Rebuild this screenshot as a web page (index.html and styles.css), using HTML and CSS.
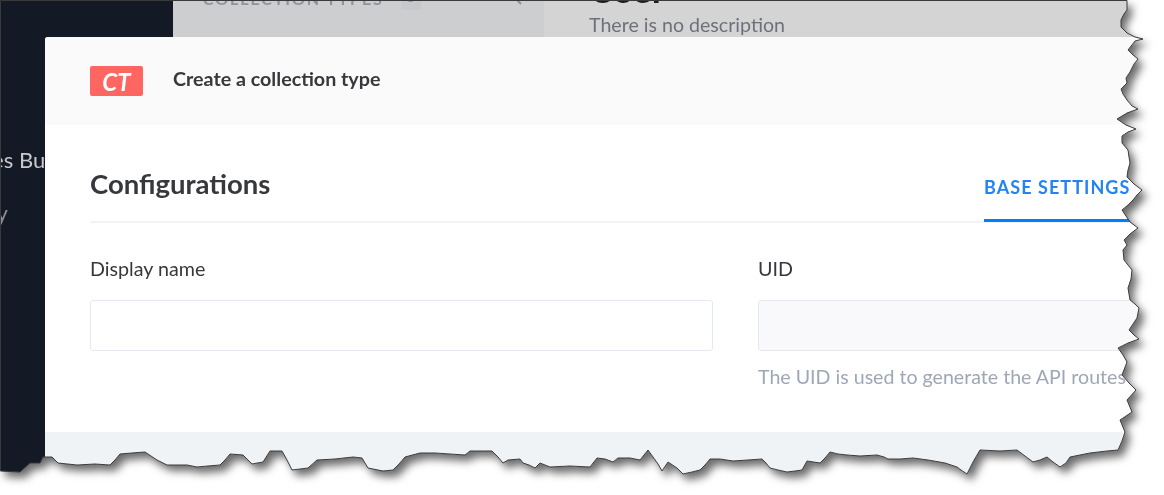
FILE: index.html
```html
<!DOCTYPE html>
<html lang="en">
<head>
<meta charset="utf-8">
<title>Create a collection type</title>
<link rel="stylesheet" href="styles.css">
</head>
<body>
<div class="page">
  <div class="shadow-wrap">
    <div class="shot">
      <div class="backdrop">
        <aside class="sidebar">
          <div class="side-item">Content-Types Builder</div>
          <div class="side-item side-item-second">Media Library</div>
        </aside>
        <section class="types">
          <div class="types-head">
            <span class="types-title">COLLECTION TYPES</span>
            <span class="types-count">6</span>
            <svg class="search" width="16" height="16" viewBox="0 0 16 16"><circle cx="6" cy="6" r="5" fill="none" stroke="#8b929c" stroke-width="2"/><path d="M10 10l5 5" stroke="#8b929c" stroke-width="2"/></svg>
          </div>
        </section>
        <main class="main">
          <div class="main-title">User</div>
          <div class="main-desc">There is no description</div>
        </main>
      </div>
      <div class="modal">
        <header class="modal-head">
          <span class="badge">CT</span>
          <span class="modal-title">Create a collection type</span>
        </header>
        <div class="modal-body">
          <div class="config-row">
            <h2 class="config-title">Configurations</h2>
            <div class="tabs"><div class="tab">BASE SETTINGS</div></div>
          </div>
          <div class="form-grid">
            <div class="field">
              <label class="label">Display name</label>
              <div class="input"></div>
            </div>
            <div class="field">
              <label class="label">UID</label>
              <div class="input input-disabled"></div>
              <p class="help">The UID is used to generate the API routes</p>
            </div>
          </div>
        </div>
        <footer class="modal-foot"></footer>
      </div>
    </div>
  </div>
  <svg class="edge" width="1164" height="495" viewBox="0 0 1164 495">
    <polygon fill="none" stroke="#3a3a3a" stroke-width="1" points="0.5,0.5 1127,0.5 1127,10 1124,14 1121,20 1121,27 1124,30 1127,33 1135,37 1143,39 1135,41 1128,50 1133,55 1138,59 1134,64 1130,72 1126,78 1127,83 1121,89 1123,94 1127,100 1132,106 1138,109 1127,113 1117,119 1126,125 1136,129 1128,132 1122,136 1122,143 1128,150 1129,157 1130,163 1128,170 1127,177 1134,184 1142,190 1137,195 1133,200 1128,205 1122,210 1126,216 1130,222 1138,228 1130,234 1124,240 1127,245 1123,250 1124,260 1132,270 1131,279 1128,288 1130,300 1135,304 1139,308 1137,318 1129,330 1134,335 1139,339 1128,343 1118,348 1123,355 1127,362 1122,375 1129,383 1136,390 1127,400 1132,412 1126,416 1120,420 1125,432 1122,441 1118,450 1107,451 1090,453 1070,457 1066,463 1060,467 1053,462 1047,457 1040,460 1033,462 1025,456 1017,450 1000,451 980,450 973,462 967,474 961,470 957,467 945,463 928,460 913,458 900,459 888,459 884,457 877,455 860,456 847,455 838,454 830,452 825,458 820,463 807,461 802,470 795,471 787,472 778,470 770,468 766,463 762,459 748,460 733,461 720,459 710,459 705,465 700,470 692,472 683,474 677,468 668,462 662,471 658,464 653,457 648,450 644,455 640,460 630,458 618,458 613,462 605,459 597,458 590,467 570,466 550,467 540,463 535,468 529,465 523,463 520,459 508,460 503,463 498,457 492,451 480,451 470,451 465,455 450,454 435,453 420,453 405,457 399,464 393,470 383,471 368,468 362,458 353,457 335,459 317,460 308,468 292,470 287,460 282,451 270,451 263,462 252,464 243,455 230,454 225,460 220,465 208,466 197,467 187,465 167,465 157,460 145,452 132,453 120,454 115,460 110,465 95,464 77,465 58,463 52,457 43,457 40,463 30,463 20,472 0.5,471"/>
  </svg>
</div>
</body>
</html>
```

FILE: styles.css
```css
* { box-sizing: border-box; }
html, body { margin: 0; padding: 0; background: #fff; }
body { font-family: Lato, "Liberation Sans", sans-serif; overflow: hidden; text-rendering: optimizeLegibility; }

.page { position: relative; width: 1164px; height: 495px; }
.shadow-wrap { width: 1164px; height: 495px; filter: drop-shadow(5px 6px 4px rgba(0, 0, 0, 0.58)); }

.shot {
  position: relative;
  width: 1164px;
  height: 495px;
  overflow: hidden;
  clip-path: polygon(0 0, 1127px 0, 1127px 10px, 1124px 14px, 1121px 20px, 1121px 27px, 1124px 30px, 1127px 33px, 1135px 37px, 1143px 39px, 1135px 41px, 1128px 50px, 1133px 55px, 1138px 59px, 1134px 64px, 1130px 72px, 1126px 78px, 1127px 83px, 1121px 89px, 1123px 94px, 1127px 100px, 1132px 106px, 1138px 109px, 1127px 113px, 1117px 119px, 1126px 125px, 1136px 129px, 1128px 132px, 1122px 136px, 1122px 143px, 1128px 150px, 1129px 157px, 1130px 163px, 1128px 170px, 1127px 177px, 1134px 184px, 1142px 190px, 1137px 195px, 1133px 200px, 1128px 205px, 1122px 210px, 1126px 216px, 1130px 222px, 1138px 228px, 1130px 234px, 1124px 240px, 1127px 245px, 1123px 250px, 1124px 260px, 1132px 270px, 1131px 279px, 1128px 288px, 1130px 300px, 1135px 304px, 1139px 308px, 1137px 318px, 1129px 330px, 1134px 335px, 1139px 339px, 1128px 343px, 1118px 348px, 1123px 355px, 1127px 362px, 1122px 375px, 1129px 383px, 1136px 390px, 1127px 400px, 1132px 412px, 1126px 416px, 1120px 420px, 1125px 432px, 1122px 441px, 1118px 450px, 1107px 451px, 1090px 453px, 1070px 457px, 1066px 463px, 1060px 467px, 1053px 462px, 1047px 457px, 1040px 460px, 1033px 462px, 1025px 456px, 1017px 450px, 1000px 451px, 980px 450px, 973px 462px, 967px 474px, 961px 470px, 957px 467px, 945px 463px, 928px 460px, 913px 458px, 900px 459px, 888px 459px, 884px 457px, 877px 455px, 860px 456px, 847px 455px, 838px 454px, 830px 452px, 825px 458px, 820px 463px, 807px 461px, 802px 470px, 795px 471px, 787px 472px, 778px 470px, 770px 468px, 766px 463px, 762px 459px, 748px 460px, 733px 461px, 720px 459px, 710px 459px, 705px 465px, 700px 470px, 692px 472px, 683px 474px, 677px 468px, 668px 462px, 662px 471px, 658px 464px, 653px 457px, 648px 450px, 644px 455px, 640px 460px, 630px 458px, 618px 458px, 613px 462px, 605px 459px, 597px 458px, 590px 467px, 570px 466px, 550px 467px, 540px 463px, 535px 468px, 529px 465px, 523px 463px, 520px 459px, 508px 460px, 503px 463px, 498px 457px, 492px 451px, 480px 451px, 470px 451px, 465px 455px, 450px 454px, 435px 453px, 420px 453px, 405px 457px, 399px 464px, 393px 470px, 383px 471px, 368px 468px, 362px 458px, 353px 457px, 335px 459px, 317px 460px, 308px 468px, 292px 470px, 287px 460px, 282px 451px, 270px 451px, 263px 462px, 252px 464px, 243px 455px, 230px 454px, 225px 460px, 220px 465px, 208px 466px, 197px 467px, 187px 465px, 167px 465px, 157px 460px, 145px 452px, 132px 453px, 120px 454px, 115px 460px, 110px 465px, 95px 464px, 77px 465px, 58px 463px, 52px 457px, 43px 457px, 40px 463px, 30px 463px, 20px 472px, 0 471px);
}

.edge { position: absolute; left: 0; top: 0; pointer-events: none; }

/* dimmed application behind the modal */
.backdrop { display: grid; grid-template-columns: 173px 371px 1fr; height: 495px; }

.sidebar { background: #131a26; overflow: hidden; padding-top: 148px; }
.side-item { margin-left: -128px; width: 320px; font-size: 22px; line-height: 24px; color: #c8c9cc; white-space: nowrap; }
.side-item-second { margin-top: 29px; margin-left: -125px; color: #8f9299; }

.types { background: #cdced0; padding-left: 30px; }
.types-head { display: flex; align-items: center; margin-top: -12px; height: 20px; }
.types-title { font-size: 16px; font-weight: 700; letter-spacing: 1.9px; color: #8d949e; white-space: nowrap; }
.types-count { flex: none; margin-left: 17px; margin-top: 2px; width: 20px; height: 22px; border-radius: 2px; background: #c6c8cb; color: #8d949e; font-size: 14px; text-align: center; }
.search { margin-left: 85px; margin-top: -3px; }

.main { background: #d4d4d4; padding-left: 45px; overflow: hidden; }
.main-title { margin-top: -29px; font-size: 37px; line-height: 36px; font-weight: 700; color: #1c1c1c; }
.main-desc { margin-top: 6px; font-size: 19.6px; line-height: 24px; color: #6d717b; white-space: nowrap; }

/* modal */
.modal {
  position: absolute;
  left: 45px;
  top: 37px;
  width: 1336px;
  height: 458px;
  display: flex;
  flex-direction: column;
  border-radius: 3px 3px 0 0;
  overflow: hidden;
  background: #fff;
}
.modal-head { flex: none; display: flex; align-items: center; height: 88px; padding-left: 45px; background: #fafafb; }
.badge {
  display: flex;
  align-items: center;
  justify-content: center;
  width: 53px;
  height: 30px;
  border-radius: 2px;
  background: #ff6661;
  color: #fff;
  font-size: 24px;
  font-weight: 700;
  font-style: italic;
}
.modal-title { margin-left: 30px; margin-bottom: 5px; font-size: 19.7px; font-weight: 700; color: #36383c; white-space: nowrap; }

.modal-body { flex: 1; padding: 0 0 0 45px; }
.config-row { display: flex; align-items: flex-end; justify-content: space-between; height: 98px; border-bottom: 2px solid #f0f3f8; }
.config-title { margin: 0 0 21px; font-size: 27.5px; line-height: 32px; font-weight: 700; color: #36383c; }
.tabs { width: 397px; margin-bottom: -1px; }
.tab { height: 52px; padding-top: 6px; border-bottom: 3px solid #007eff; color: #2383f5; font-size: 18px; line-height: 22px; font-weight: 700; letter-spacing: 1.05px; white-space: nowrap; }

.form-grid { display: grid; grid-template-columns: 623px 623px; column-gap: 45px; padding-top: 35px; }
.label { display: block; font-size: 19.7px; line-height: 22px; color: #36383c; }
.input { height: 51px; margin-top: 20px; border: 1px solid #e3e9f3; border-radius: 3px; background: #fff; }
.input-disabled { background: #f9f9fb; }
.help { margin: 15px 0 0; font-size: 19.6px; line-height: 22px; color: #9ea7b8; white-space: nowrap; }

.modal-foot { flex: none; height: 63px; background: #eff3f6; }
```
